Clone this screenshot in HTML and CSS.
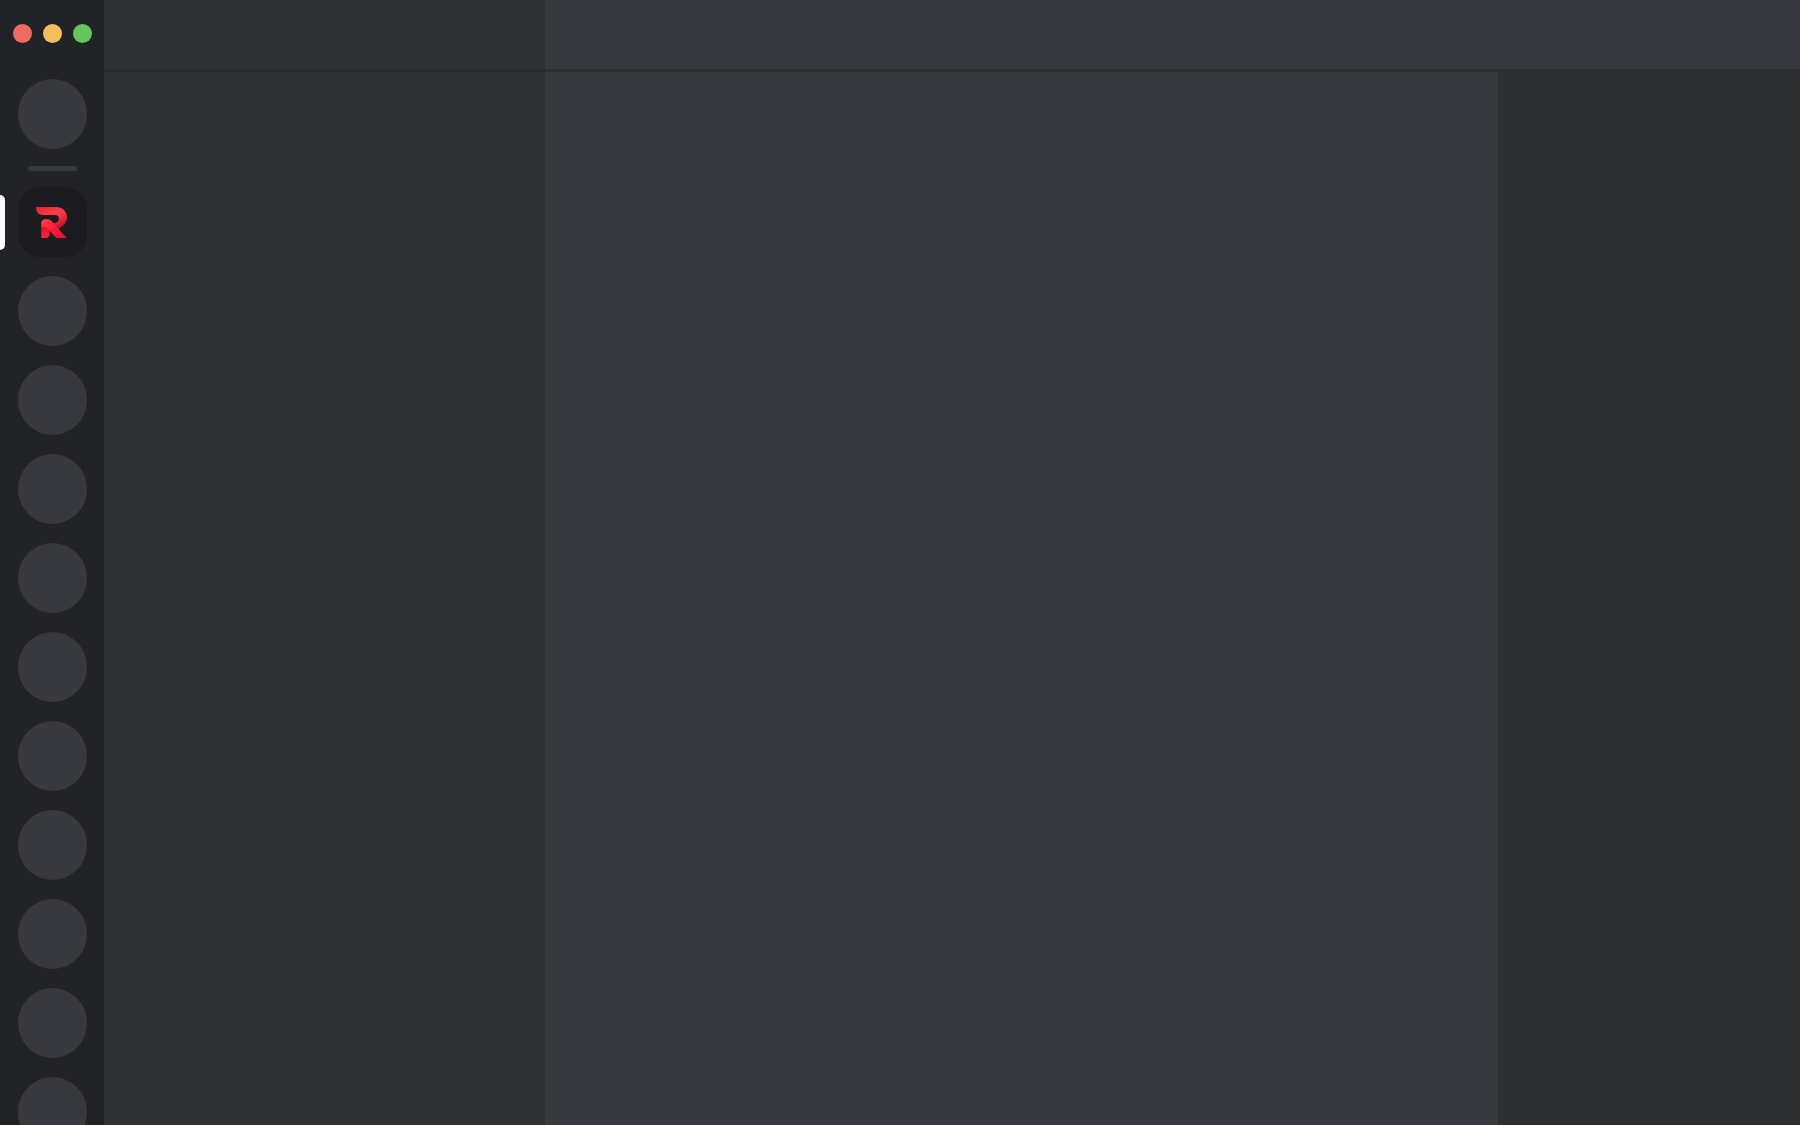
FILE: index.html
```html
<!DOCTYPE html>
<html lang="en">
<head>
<meta charset="utf-8">
<title>Chat</title>
<link rel="stylesheet" href="styles.css">
</head>
<body>
<div class="app">
  <nav class="servers" aria-label="Servers">
    <div class="window-controls">
      <button class="control control-close" aria-label="Close"></button>
      <button class="control control-minimize" aria-label="Minimize"></button>
      <button class="control control-zoom" aria-label="Zoom"></button>
    </div>
    <button class="server" aria-label="Home"></button>
    <div class="divider"></div>
    <div class="server-list">
      <div class="selected">
        <button class="server server-active" aria-label="Selected server">
          <svg class="logo" viewBox="0 0 93 93" aria-hidden="true">
            <defs>
              <linearGradient id="bowl" x1="0" y1="0" x2="0.7" y2="1">
                <stop offset="0" stop-color="#e8202f"/>
                <stop offset="0.45" stop-color="#ff4046"/>
                <stop offset="0.7" stop-color="#f52a3c"/>
                <stop offset="1" stop-color="#b80d26"/>
              </linearGradient>
              <linearGradient id="stem" x1="0" y1="0" x2="0" y2="1">
                <stop offset="0" stop-color="#c8102b"/>
                <stop offset="1" stop-color="#ff2440"/>
              </linearGradient>
              <linearGradient id="leg" x1="0" y1="0" x2="1" y2="1">
                <stop offset="0" stop-color="#ff4545"/>
                <stop offset="0.5" stop-color="#fa1c3c"/>
                <stop offset="1" stop-color="#dc1233"/>
              </linearGradient>
            </defs>
            <path fill="url(#bowl)" d="M0 0H60C79 0 93 13 93 31C93 45 85 54 73 62L66 68L50 48H56C64 47 69 42 69 35C69 28 65 24 57 24H22C8 24 0 15 0 0Z"/>
            <path fill="url(#stem)" d="M16 45L41 65V80C41 88 36 93 28 93H16Z"/>
            <path fill="url(#leg)" d="M16 54V48C16 40 22 36 31 36C39 36 44 40 49 45L92 93H61L36 66C29 59 20 56 16 63Z"/>
          </svg>
        </button>
      </div>
      <button class="server" aria-label="Server 2"></button>
      <button class="server" aria-label="Server 3"></button>
      <button class="server" aria-label="Server 4"></button>
      <button class="server" aria-label="Server 5"></button>
      <button class="server" aria-label="Server 6"></button>
      <button class="server" aria-label="Server 7"></button>
      <button class="server" aria-label="Server 8"></button>
      <button class="server" aria-label="Server 9"></button>
      <button class="server" aria-label="Server 10"></button>
      <button class="server" aria-label="Server 11"></button>
    </div>
  </nav>
  <aside class="channels">
    <header class="bar"></header>
  </aside>
  <div class="content">
    <header class="bar"></header>
    <div class="panes">
      <main class="messages"></main>
      <aside class="members"></aside>
    </div>
  </div>
</div>
</body>
</html>
```
FILE: styles.css
```css
* {
  box-sizing: border-box;
}

body {
  margin: 0;
  background: #38393e;
  font-family: Inter, sans-serif;
}

button {
  padding: 0;
  border: 0;
  cursor: pointer;
}

.app {
  display: flex;
  height: 100vh;
  overflow: hidden;
}

.servers {
  display: flex;
  flex: none;
  flex-direction: column;
  align-items: center;
  width: 104px;
  padding: 24px 0 0 1px;
  overflow: hidden;
  background: #222327;
}

.window-controls {
  display: flex;
  flex: none;
  gap: 11px;
  margin-bottom: 36px;
}

.control {
  width: 19px;
  height: 19px;
  border-radius: 50%;
}

.control-close {
  background: #ec6a61;
}

.control-minimize {
  background: #f4bf5a;
}

.control-zoom {
  background: #65c65a;
}

.server {
  display: block;
  flex: none;
  width: 69px;
  height: 70px;
  border-radius: 50%;
  background: #38393e;
}

.divider {
  flex: none;
  width: 49px;
  height: 5px;
  margin: 17px 0 16px;
  border-radius: 3px;
  background: #38393e;
}

.server-list {
  display: flex;
  flex-direction: column;
  align-items: center;
  gap: 19px;
  width: 100%;
}

.selected {
  position: relative;
  display: flex;
  justify-content: center;
  width: 100%;
}

.selected::before {
  content: "";
  position: absolute;
  top: 8px;
  left: -1px;
  width: 5px;
  height: 55px;
  border-radius: 0 5px 5px 0;
  background: #fff;
}

.server-active {
  display: flex;
  align-items: center;
  justify-content: center;
  padding: 1px 2px 0 0;
  border-radius: 22px;
  background: #1c1b20;
}

.logo {
  width: 31px;
  height: 31px;
}

.channels {
  flex: none;
  width: 441px;
  background: #303135;
}

.bar {
  flex: none;
  height: 72px;
  border-bottom: 3px solid #292a2e;
}

.content {
  display: flex;
  flex: 1;
  flex-direction: column;
}

.content .bar {
  border-bottom-color: #2d2e32;
}

.panes {
  display: flex;
  flex: 1;
}

.messages {
  flex: 1;
}

.members {
  width: 302px;
  background: #2d2e32;
}
```
